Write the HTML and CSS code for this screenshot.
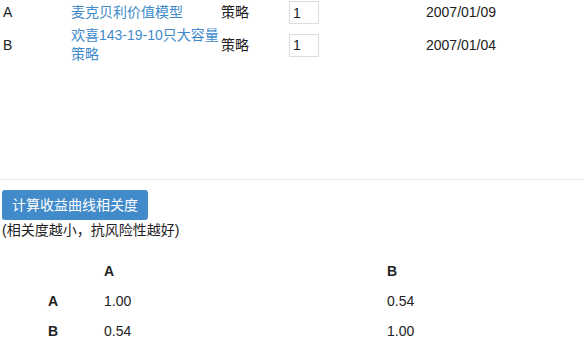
FILE: index.html
```html
<!DOCTYPE html>
<html lang="zh-CN">
<head>
    <meta charset="UTF-8">
    <meta name="viewport" content="width=device-width, initial-scale=1.0">
    <title>策略相关度</title>
    <link rel="stylesheet" href="styles.css">
</head>
<body>
    <table class="strategies">
        <tr>
            <td class="c-name">A</td>
            <td class="c-link"><a href="#">麦克贝利价值模型</a></td>
            <td class="c-type">策略</td>
            <td class="c-weight"><input type="text" value="1"></td>
            <td class="c-date">2007/01/09</td>
        </tr>
        <tr>
            <td class="c-name">B</td>
            <td class="c-link"><a href="#">欢喜143-19-10只大容量策略</a></td>
            <td class="c-type">策略</td>
            <td class="c-weight"><input type="text" value="1"></td>
            <td class="c-date">2007/01/04</td>
        </tr>
    </table>

    <hr class="divider">

    <button class="btn-primary" type="button">计算收益曲线相关度</button>
    <p class="hint">(相关度越小，抗风险性越好)</p>

    <table class="matrix">
        <tr>
            <th class="m-head"></th>
            <th class="m-col">A</th>
            <th>B</th>
        </tr>
        <tr>
            <th class="m-head">A</th>
            <td class="m-col">1.00</td>
            <td>0.54</td>
        </tr>
        <tr>
            <th class="m-head">B</th>
            <td class="m-col">0.54</td>
            <td>1.00</td>
        </tr>
    </table>
</body>
</html>
```

FILE: styles.css
```css
body { margin: 0; font-family: "Liberation Sans", Arial, "Noto Sans CJK SC", sans-serif; font-size: 14px; line-height: 19px; color: #222; background: #fff; }
a { color: #428bca; text-decoration: none; }

.strategies { border-collapse: collapse; }
.strategies td { padding: 1px 0; vertical-align: middle; }
.strategies .c-name { width: 68px; padding-left: 3px; }
.strategies .c-link { width: 150px; }
.strategies .c-type { width: 68px; }
.strategies .c-weight { width: 137px; }
.strategies input { box-sizing: border-box; width: 30px; height: 23px; margin: 0; padding: 0 3px; border: 1px solid #ddd; font: inherit; color: #222; display: block; }

.divider { margin: 114px 0 0; border: 0; border-top: 1px solid #eee; }

.btn-primary { display: block; margin: 10px 0 0 2px; padding: 5px 10px; border: 0; border-radius: 3px; background: #428bca; color: #fff; font: inherit; line-height: 20px; }
.hint { margin: 1px 0 0 2px; }

.matrix { border-collapse: collapse; margin: 16px 0 0 40px; }
.matrix th, .matrix td { padding: 5px 8px; line-height: 20px; text-align: left; }
.matrix th { font-weight: bold; }
.matrix .m-head { width: 40px; }
.matrix .m-col { width: 267px; }
```
